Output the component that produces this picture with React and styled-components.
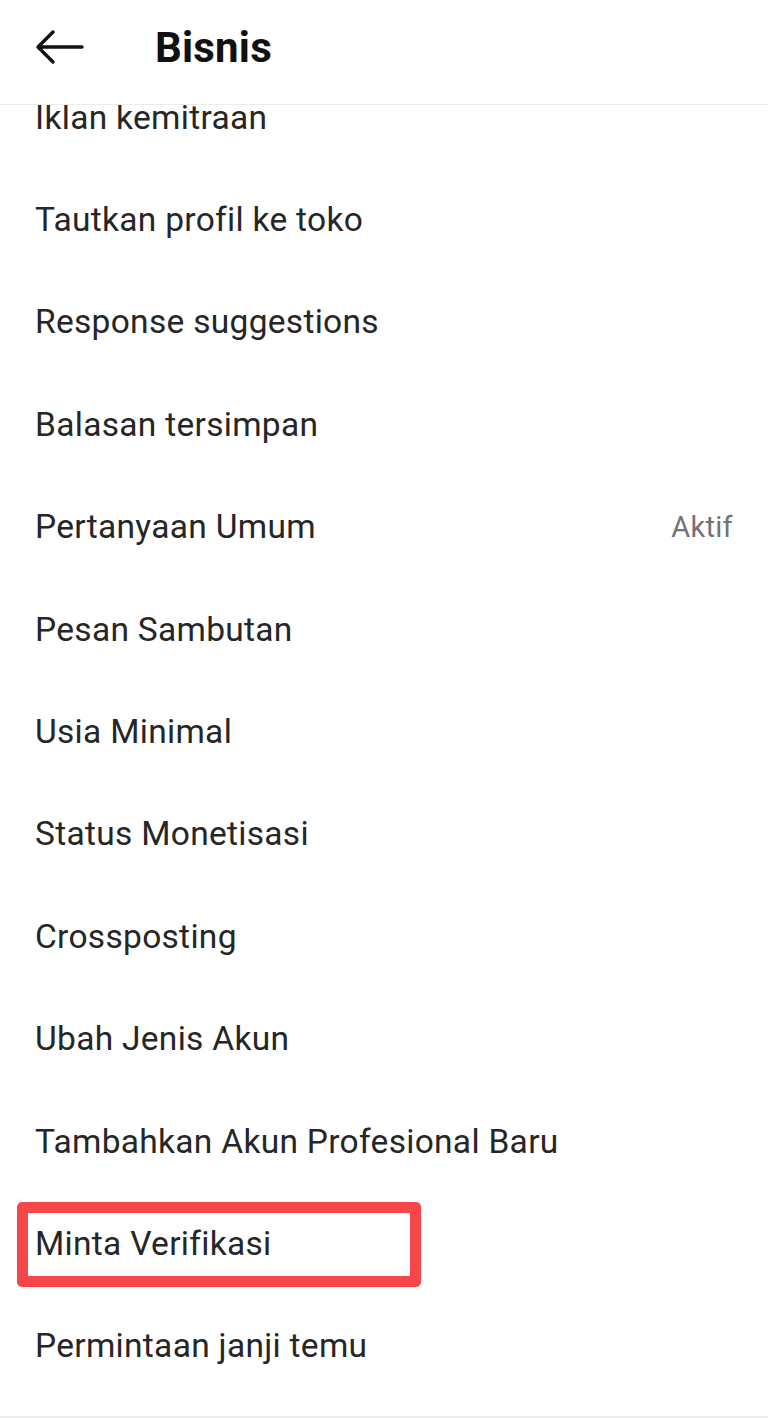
import React from "react";
import styled, { createGlobalStyle } from "styled-components";

const Global = createGlobalStyle`
  html, body { margin: 0; padding: 0; background: #fff; }
  body { font-family: Roboto, "Noto Sans", Arial, sans-serif; -webkit-font-smoothing: antialiased; }
  #root { width: 768px; height: 1418px; overflow: hidden; }
`;

const Screen = styled.div`
  width: 768px;
  height: 1418px;
  display: flex;
  flex-direction: column;
  overflow: hidden;
  background: #fff;
  border-bottom: 2px solid #ececec;
  box-sizing: border-box;
`;

const Header = styled.header`
  position: relative;
  z-index: 2;
  height: 105px;
  flex: none;
  display: flex;
  align-items: center;
  gap: 69px;
  padding: 0 0 10px 34px;
  box-sizing: border-box;
  background: #fff;
  border-bottom: 1.5px solid #ececec;
`;

const BackButton = styled.button`
  border: 0;
  background: none;
  padding: 0;
  width: 52px;
  height: 40px;
  display: flex;
  align-items: center;
  justify-content: center;
  color: #111;
`;

const Title = styled.h1`
  margin: 0;
  font-size: 42px;
  font-weight: 700;
  color: #111;
  letter-spacing: 0.2px;
`;

const List = styled.ul`
  list-style: none;
  margin: -39px 0 0;
  padding: 0;
  display: flex;
  flex-direction: column;
`;

const Row = styled.li`
  position: relative;
  height: 102.4px;
  display: flex;
  align-items: center;
  justify-content: space-between;
  padding: 0 35px;
  box-sizing: border-box;
`;

const Label = styled.span`
  font-size: 33.5px;
  color: #262626;
  letter-spacing: 0.3px;
`;

const Value = styled.span`
  font-size: 29px;
  color: #737373;
  letter-spacing: 0.3px;
`;

const Highlight = styled.div`
  position: absolute;
  left: 17px;
  top: 10px;
  width: 404px;
  height: 85px;
  border: 11px solid #f5464a;
  border-radius: 5px;
  box-sizing: border-box;
  pointer-events: none;
`;

const items = [
  { label: "Iklan kemitraan" },
  { label: "Tautkan profil ke toko" },
  { label: "Response suggestions" },
  { label: "Balasan tersimpan" },
  { label: "Pertanyaan Umum", value: "Aktif" },
  { label: "Pesan Sambutan" },
  { label: "Usia Minimal" },
  { label: "Status Monetisasi" },
  { label: "Crossposting" },
  { label: "Ubah Jenis Akun" },
  { label: "Tambahkan Akun Profesional Baru" },
  { label: "Minta Verifikasi", highlight: true },
  { label: "Permintaan janji temu" },
];

export default function App() {
  return (
    <>
      <Global />
      <Screen>
        <Header>
          <BackButton aria-label="Kembali">
            <svg width="50" height="36" viewBox="0 0 50 36" fill="none">
              <path
                d="M47 18H4M18 3L3 18l15 15"
                stroke="#111"
                strokeWidth="3.4"
                strokeLinecap="round"
                strokeLinejoin="round"
              />
            </svg>
          </BackButton>
          <Title>Bisnis</Title>
        </Header>
        <List>
          {items.map((it) => (
            <Row key={it.label}>
              <Label>{it.label}</Label>
              {it.value && <Value>{it.value}</Value>}
              {it.highlight && <Highlight />}
            </Row>
          ))}
        </List>
      </Screen>
    </>
  );
}
